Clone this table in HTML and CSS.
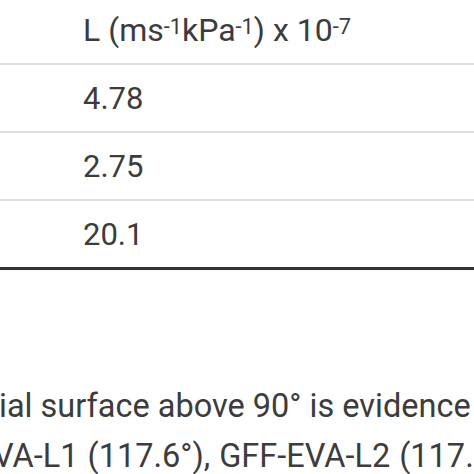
FILE: index.html
```html
<!DOCTYPE html>
<html lang="en">
<head>
    <meta charset="UTF-8">
    <meta name="viewport" content="width=device-width, initial-scale=1.0">
    <title>Permeability table</title>
    <link rel="stylesheet" href="styles.css">
</head>
<body>
    <div class="page">
        <table class="data-table">
            <thead>
                <tr>
                    <th class="col-blank"></th>
                    <th>L (ms<sup>-1</sup>kPa<sup>-1</sup>) x 10<sup>-7</sup></th>
                </tr>
            </thead>
            <tbody>
                <tr>
                    <td class="col-blank"></td>
                    <td>4.78</td>
                </tr>
                <tr>
                    <td class="col-blank"></td>
                    <td>2.75</td>
                </tr>
                <tr class="last-row">
                    <td class="col-blank"></td>
                    <td>20.1</td>
                </tr>
            </tbody>
        </table>

        <!-- paragraph under the table, cut at both sides -->
        <div class="body-text">
            <div class="text-line line-one">ial surface above 90° is evidence of the hydrophobic</div>
            <div class="text-line line-two">VA-L1 (117.6°), GFF-EVA-L2 (117.2°) and</div>
        </div>
    </div>
</body>
</html>
```

FILE: styles.css
```css
* {
    margin: 0;
    padding: 0;
    box-sizing: border-box;
}

body {
    font-family: Roboto, 'Liberation Sans', Arial, sans-serif;
    color: #3c3c3c;
    background: #fff;
    overflow: hidden;
}

.page {
    width: 474px;
    height: 474px;
    overflow: hidden;
}

.data-table {
    width: 100%;
    border-collapse: collapse;
    font-size: 31px;
}

.data-table th,
.data-table td {
    text-align: left;
    font-weight: normal;
    line-height: 37px;
    padding: 15px 0 14px 0;
    border-bottom: 2px solid #e0e0e0;
}

.data-table th {
    font-size: 32px;
    padding-top: 12px;
    white-space: nowrap;
}

.col-blank {
    width: 83px;
}

.data-table sup {
    font-size: 0.68em;
    line-height: 0;
    vertical-align: 7px;
}

.data-table .last-row td {
    border-bottom: 3px solid #333;
}

.body-text {
    margin-top: 111px;
    font-size: 32.5px;
    line-height: 50px;
    white-space: nowrap;
}

.line-one {
    margin-left: -1px;
}

.line-two {
    margin-left: -7px;
    word-spacing: 1px;
}
```
